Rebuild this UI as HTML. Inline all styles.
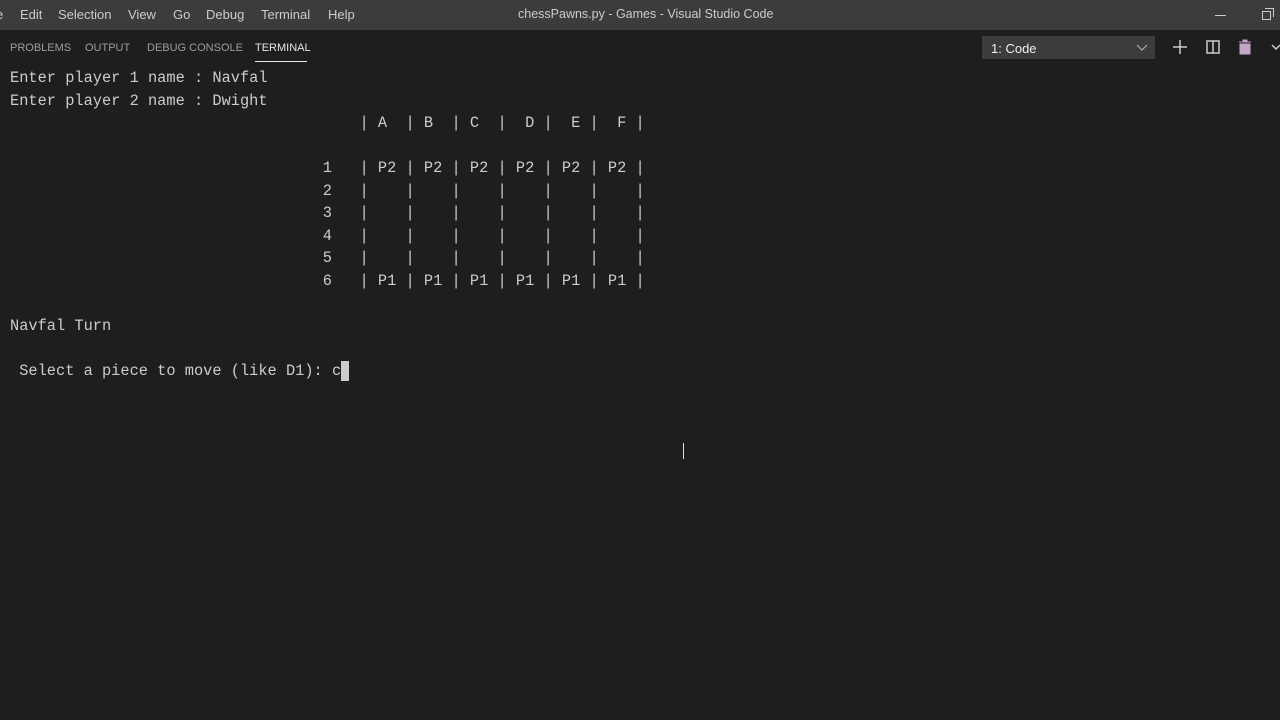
<!DOCTYPE html>
<html><head><meta charset="utf-8"><style>
*{margin:0;padding:0;box-sizing:border-box}
body{width:1280px;height:720px;background:#1e1e1e;overflow:hidden;position:relative;font-family:"Liberation Sans",sans-serif}
#tb{position:absolute;left:0;top:0;width:1280px;height:30px;background:#3c3c3c;color:#cccccc;font-size:13px}
#tb span{position:absolute;top:7px}
#tabs span{position:absolute;top:42px;font-size:11px;color:#9d9d9d}
pre{position:absolute;left:10px;top:67px;font-family:"Liberation Mono",monospace;font-size:15.33px;line-height:22.5px;color:#cccccc}
.cur{position:absolute;left:341px;top:361px;width:8px;height:20px;background:#cccccc}
</style></head><body>
<div id="tb">
<span style="left:-4px">e</span><span style="left:20px">Edit</span><span style="left:58px">Selection</span><span style="left:128px">View</span><span style="left:173px">Go</span><span style="left:206px">Debug</span><span style="left:261px">Terminal</span><span style="left:328px">Help</span>
<span style="left:518px;font-size:12.5px">chessPawns.py - Games - Visual Studio Code</span>
<div style="position:absolute;left:1215px;top:15px;width:11px;height:1px;background:#ccc"></div>
<div style="position:absolute;left:1262px;top:11px;width:9px;height:9px;border:1px solid #ccc"></div>
<div style="position:absolute;left:1265px;top:8px;width:9px;height:9px;border-top:1px solid #ccc;border-right:1px solid #ccc"></div>
</div>
<div id="tabs">
<span style="left:10px">PROBLEMS</span><span style="left:85px">OUTPUT</span><span style="left:147px">DEBUG CONSOLE</span><span style="left:255px;color:#e7e7e7">TERMINAL</span>
</div>
<div style="position:absolute;left:255px;top:61px;width:52px;height:1px;background:#e7e7e7"></div>
<div style="position:absolute;left:982px;top:36px;width:173px;height:23px;background:#3c3c3c;color:#f0f0f0;font-size:13px;padding:5px 0 0 9px">1: Code</div>
<svg style="position:absolute;left:1136px;top:44px" width="12" height="8"><path d="M1 1l5 5 5-5" fill="none" stroke="#aaa" stroke-width="1.2"/></svg>
<svg style="position:absolute;left:1170px;top:38px" width="110" height="20" viewBox="0 0 110 20">
<path d="M10 2v14M3 9h14" stroke="#ccc" stroke-width="1.5"/>
<rect x="37" y="3" width="12" height="12" fill="none" stroke="#ccc" stroke-width="1.5"/><path d="M43 3v12" stroke="#ccc" stroke-width="1.5"/>
<path d="M69 4h12M73 4v-2h4v2M70 6h10v10h-10z" fill="#c5a5c5" stroke="#c5a5c5" stroke-width="1"/>
<path d="M102 7l4 4 4-4" fill="none" stroke="#ccc" stroke-width="1.5"/>
</svg>
<pre>Enter player 1 name : Navfal
Enter player 2 name : Dwight
                                      | A  | B  | C  |  D |  E |  F |

                                  1   | P2 | P2 | P2 | P2 | P2 | P2 |
                                  2   |    |    |    |    |    |    |
                                  3   |    |    |    |    |    |    |
                                  4   |    |    |    |    |    |    |
                                  5   |    |    |    |    |    |    |
                                  6   | P1 | P1 | P1 | P1 | P1 | P1 |

Navfal Turn

 Select a piece to move (like D1): c</pre>
<div class="cur"></div>
<div style="position:absolute;left:683px;top:443px;width:1px;height:16px;background:#ddd"></div>
</body></html>
